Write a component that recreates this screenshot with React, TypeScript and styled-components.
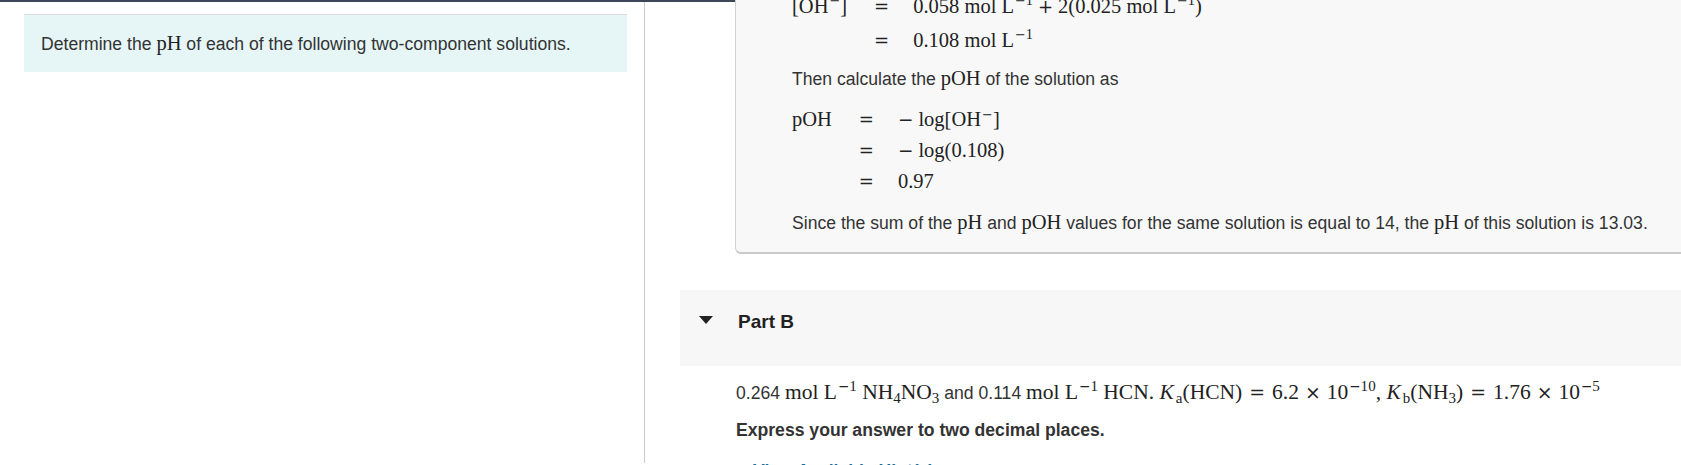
import styled, { createGlobalStyle } from "styled-components"

const GlobalStyle = createGlobalStyle`
  html, body {
    margin: 0;
    padding: 0;
    background: #ffffff;
    overflow: hidden;
  }
  body {
    font-family: "Liberation Sans", Arial, sans-serif;
    font-size: 17.6px;
    color: #333333;
  }
`

const Inv = ({ n }: { n: string }) => (
  <Sup>
    <Neg>−</Neg>
    {n}
  </Sup>
)

const App = () => {
  return (
    <>
      <GlobalStyle />
      <TopBar />
      <Layout>
        <LeftPane>
          <PromptBox>
            <span>
              Determine the <M>pH</M> of each of the following two-component solutions.
            </span>
          </PromptBox>
        </LeftPane>

        <RightPane>
          <SolutionCard>
            <MathAlign $row={34}>
              <Cell $right>
                [OH<Inv n="" />]
              </Cell>
              <Eq>=</Eq>
              <Cell>
                0.058 mol L<Inv n="1" />
                <Op $space={5}>+</Op>2(0.025 mol L<Inv n="1" />)
              </Cell>
              <Cell $right />
              <Eq>=</Eq>
              <Cell>
                0.108 mol L<Inv n="1" />
              </Cell>
            </MathAlign>

            <Paragraph $top={9}>
              Then calculate the <M>pOH</M> of the solution as
            </Paragraph>

            <MathAlign $top={13} $row={31}>
              <Cell $right>pOH</Cell>
              <Eq>=</Eq>
              <Cell>
                <Minus>−</Minus>log[OH<Inv n="" />]
              </Cell>
              <Cell $right />
              <Eq>=</Eq>
              <Cell>
                <Minus>−</Minus>log(0.108)
              </Cell>
              <Cell $right />
              <Eq>=</Eq>
              <Cell>0.97</Cell>
            </MathAlign>

            <Paragraph $top={13}>
              Since the sum of the <M>pH</M> and <M>pOH</M> values for the same solution is equal to 14, the{" "}
              <M>pH</M> of this solution is 13.03.
            </Paragraph>
          </SolutionCard>

          <PartHeader>
            <Caret />
            <PartTitle>Part B</PartTitle>
          </PartHeader>

          <PartBody>
            <ProblemLine>
              0.264{" "}
              <M $size={21.5}>
                mol L<Inv n="1" /> NH<Sub>4</Sub>NO<Sub>3</Sub>
              </M>{" "}
              and 0.114{" "}
              <M $size={21.5}>
                mol L<Inv n="1" /> HCN. <Var>K</Var>
                <Sub>a</Sub>(HCN)<Op $space={7}>=</Op>6.2<Op $space={6}>×</Op>10
                <Inv n="10" />, <Var>K</Var>
                <Sub>b</Sub>(NH<Sub>3</Sub>)<Op $space={7}>=</Op>1.76<Op $space={6}>×</Op>10
                <Inv n="5" />
              </M>
            </ProblemLine>
            <Instruction>Express your answer to two decimal places.</Instruction>
            <HintToggle>
              <HintArrow />
              View Available Hint(s)
            </HintToggle>
          </PartBody>
        </RightPane>
      </Layout>
    </>
  )
}

export default App

const TopBar = styled.div`
  height: 2px;
  background-color: #3e4757;
`

const Layout = styled.div`
  display: flex;
  align-items: flex-start;
`

const LeftPane = styled.div`
  flex: none;
  width: 645px;
  min-height: 461px;
  box-sizing: border-box;
  padding: 12px 17px 0 24px;
  border-right: 1px solid #c6ccd4;
`

const PromptBox = styled.div`
  display: flex;
  align-items: center;
  height: 57px;
  padding: 0 17px;
  background-color: #e6f6f7;
  border-top: 1px solid #dddddd;
  line-height: 24px;
`

const M = styled.span<{ $size?: number }>`
  font-family: "Liberation Serif", "Times New Roman", serif;
  font-size: ${(p) => p.$size ?? 20.5}px;
  color: #222222;
  white-space: nowrap;
`

const Var = styled.i`
  margin-right: 2px;
`

const Sup = styled.sup`
  font-size: 0.7em;
  line-height: 0;
  vertical-align: 0.5em;
  margin-left: 1px;
`

const Neg = styled.span`
  font-family: "DejaVu Serif", serif;
  font-size: 0.9em;
`

const Sub = styled.sub`
  font-size: 0.7em;
  line-height: 0;
  vertical-align: -0.25em;
`

const Op = styled.span<{ $space: number }>`
  margin: 0 ${(p) => p.$space}px;
  font-family: "DejaVu Serif", serif;
  font-size: 0.88em;
`

const Minus = styled.span`
  font-family: "DejaVu Serif", serif;
  font-size: 0.9em;
  margin-right: 5px;
`

const RightPane = styled.div`
  flex: 1;
  min-width: 0;
  padding-left: 35px;
`

const SolutionCard = styled.div`
  margin: -35px -40px 0 55px;
  padding: 22px 20px 17px 56px;
  background-color: #f8f8f8;
  border-left: 1px solid #d2d2d2;
  border-bottom: 2px solid #c9c9c9;
  border-bottom-left-radius: 6px;
`

const MathAlign = styled.div<{ $top?: number; $row: number }>`
  display: inline-grid;
  grid-template-columns: auto auto auto;
  grid-auto-rows: ${(p) => p.$row}px;
  align-items: center;
  margin-top: ${(p) => p.$top ?? 0}px;
  font-family: "Liberation Serif", "Times New Roman", serif;
  font-size: 20.5px;
  color: #222222;
  white-space: nowrap;
`

const Cell = styled.div<{ $right?: boolean }>`
  text-align: ${(p) => (p.$right ? "right" : "left")};
`

const Eq = styled.div`
  padding: 0 24px 0 27px;
  font-family: "DejaVu Serif", serif;
  font-size: 18px;
  text-align: center;
`

const Paragraph = styled.p<{ $top: number }>`
  margin: ${(p) => p.$top}px 0 0 0;
  line-height: 24px;
`

const PartHeader = styled.div`
  display: flex;
  align-items: flex-start;
  gap: 25px;
  height: 76px;
  box-sizing: border-box;
  margin-top: 36px;
  margin-right: -40px;
  padding: 20px 0 0 19px;
  background-color: #f7f7f7;
`

const Caret = styled.span`
  display: block;
  width: 0;
  height: 0;
  margin-top: 6px;
  border-left: 7px solid transparent;
  border-right: 7px solid transparent;
  border-top: 8px solid #222222;
`

const PartTitle = styled.h3`
  margin: 0;
  font-size: 19px;
  font-weight: 700;
  line-height: 24px;
  color: #222222;
`

const PartBody = styled.div`
  padding: 14px 0 0 56px;
`

const ProblemLine = styled.p`
  margin: 0;
  line-height: 24px;
  white-space: nowrap;
`

const Instruction = styled.p`
  margin: 13px 0 0 0;
  font-weight: 700;
  line-height: 24px;
  color: #333333;
`

const HintToggle = styled.div`
  display: flex;
  align-items: center;
  gap: 10px;
  margin-top: 17px;
  font-weight: 700;
  line-height: 24px;
  color: #1b6d96;
`

const HintArrow = styled.span`
  display: block;
  width: 0;
  height: 0;
  border-top: 6px solid transparent;
  border-bottom: 6px solid transparent;
  border-left: 7px solid #1b6d96;
`
